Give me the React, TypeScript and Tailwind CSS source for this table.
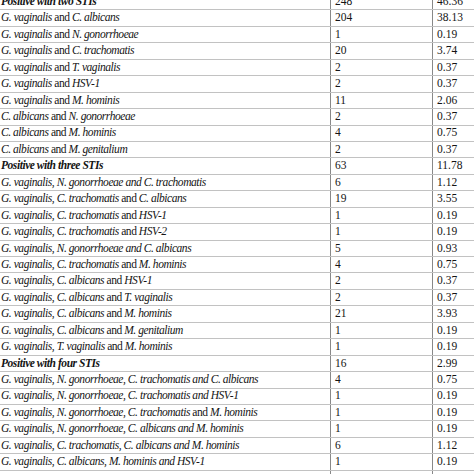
import React from 'react';

// segments split by "|": even index = italic, odd index = roman
type Row = { label: string; n: string; pct: string; head?: boolean };

const rows: Row[] = [
  { label: 'Positive with two STIs', n: '248', pct: '46.36', head: true },
  { label: 'G. vaginalis| and |C. albicans', n: '204', pct: '38.13' },
  { label: 'G. vaginalis| and |N. gonorrhoeae', n: '1', pct: '0.19' },
  { label: 'G. vaginalis| and |C. trachomatis', n: '20', pct: '3.74' },
  { label: 'G. vaginalis| and |T. vaginalis', n: '2', pct: '0.37' },
  { label: 'G. vaginalis| and |HSV-1', n: '2', pct: '0.37' },
  { label: 'G. vaginalis| and |M. hominis', n: '11', pct: '2.06' },
  { label: 'C. albicans| and |N. gonorrhoeae', n: '2', pct: '0.37' },
  { label: 'C. albicans| and |M. hominis', n: '4', pct: '0.75' },
  { label: 'C. albicans| and |M. genitalium', n: '2', pct: '0.37' },
  { label: 'Positive with three STIs', n: '63', pct: '11.78', head: true },
  { label: 'G. vaginalis, N. gonorrhoeae and C. trachomatis', n: '6', pct: '1.12' },
  { label: 'G. vaginalis, C. trachomatis| and |C. albicans', n: '19', pct: '3.55' },
  { label: 'G. vaginalis, C. trachomatis| and |HSV-1', n: '1', pct: '0.19' },
  { label: 'G. vaginalis, C. trachomatis| and |HSV-2', n: '1', pct: '0.19' },
  { label: 'G. vaginalis, N. gonorrhoeae and C. albicans', n: '5', pct: '0.93' },
  { label: 'G. vaginalis, C. trachomatis| and |M. hominis', n: '4', pct: '0.75' },
  { label: 'G. vaginalis, C. albicans| and |HSV-1', n: '2', pct: '0.37' },
  { label: 'G. vaginalis, C. albicans| and |T. vaginalis', n: '2', pct: '0.37' },
  { label: 'G. vaginalis, C. albicans| and |M. hominis', n: '21', pct: '3.93' },
  { label: 'G. vaginalis, C. albicans| and |M. genitalium', n: '1', pct: '0.19' },
  { label: 'G. vaginalis, T. vaginalis| and |M. hominis', n: '1', pct: '0.19' },
  { label: 'Positive with four STIs', n: '16', pct: '2.99', head: true },
  { label: 'G. vaginalis, N. gonorrhoeae, C. trachomatis and C. albicans', n: '4', pct: '0.75' },
  { label: 'G. vaginalis, N. gonorrhoeae, C. trachomatis and HSV-1', n: '1', pct: '0.19' },
  { label: 'G. vaginalis, N. gonorrhoeae, C. trachomatis| and |M. hominis', n: '1', pct: '0.19' },
  { label: 'G. vaginalis, N. gonorrhoeae, C. albicans and M. hominis', n: '1', pct: '0.19' },
  { label: 'G. vaginalis, C. trachomatis, C. albicans and M. hominis', n: '6', pct: '1.12' },
  { label: 'G. vaginalis, C. albicans, M. hominis and HSV-1', n: '1', pct: '0.19' },
  { label: '', n: '', pct: '' },
];

function Label({ row }: { row: Row }) {
  if (row.head) return <span className="font-bold italic tracking-[-0.45px]">{row.label}</span>;
  return (
    <span className="tracking-[-0.45px]">
      {row.label.split('|').map((s, i) => (
        <span key={i} className={i % 2 === 0 ? 'italic' : ''}>
          {s}
        </span>
      ))}
    </span>
  );
}

export default function App() {
  return (
    <div className="w-[474px] h-[474px] overflow-hidden bg-white">
      <div className="-mt-[6px] font-['Liberation_Serif',serif] text-[11.5px] text-[#141414] leading-none">
        {rows.map((row, i) => (
          <div key={i} className="flex h-[16.45px] border-b-[1.5px] border-[#c2c2c2]">
            <div className="w-[330px] flex items-center pl-[1px] whitespace-pre">
              <Label row={row} />
            </div>
            <div className="w-[102px] flex items-center pl-[4px] border-l border-[#888888]">{row.n}</div>
            <div className="flex-1 flex items-center pl-[4px] border-l border-[#888888]">{row.pct}</div>
          </div>
        ))}
      </div>
    </div>
  );
}
